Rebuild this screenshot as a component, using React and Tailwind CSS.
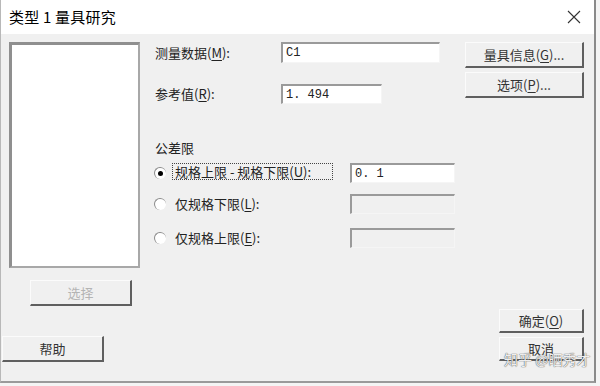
import React from "react";

const CJK = { fontFamily: '"Noto Sans CJK SC", "Noto Sans", sans-serif' };
const MONO = { fontFamily: '"Liberation Mono", "Noto Sans CJK SC", monospace' };

function Btn({ w, h, children, disabled, className = "" }) {
  return (
    <div
      className={`flex items-center justify-center bg-[#f0f0f0] border-t border-l border-[#fbfbfb] border-r-2 border-b-2 border-r-[#5f5f5f] border-b-[#5f5f5f] text-[13px] ${disabled ? "text-[#b4b4b4]" : "text-[#333]"} ${className}`}
      style={{ width: w, height: h }}
    >
      {children}
    </div>
  );
}

function Input({ w, h, value, disabled }) {
  return (
    <div
      className={`flex items-center border-t-2 border-l-2 border-[#9a9a9a] border-r border-b border-r-[#f5f5f5] border-b-[#f5f5f5] pl-[3px] text-[12px] text-[#222] ${disabled ? "bg-[#f0f0f0]" : "bg-white"}`}
      style={{ width: w, height: h, ...MONO }}
    >
      {value}
    </div>
  );
}

function Radio({ checked }) {
  return (
    <div className="w-[12px] h-[12px] rounded-full bg-white border-t-[1.5px] border-l-[1.5px] border-[#8a8a8a] border-r-0 border-b-0 flex items-center justify-center shrink-0">
      {checked && <div className="w-[5px] h-[5px] rounded-full bg-black" />}
    </div>
  );
}

const U = ({ children }) => <span className="underline underline-offset-2">{children}</span>;

export default function App() {
  return (
    <div className="w-[600px] h-[386px] bg-[#f4f4f4] overflow-hidden relative" style={CJK}>
      <div className="w-[596px] h-[383px] border-l border-r-2 border-b-2 border-l-[#b8b8b8] border-r-[#8a8a8a] border-b-[#9a9a9a] flex flex-col">
        {/* title bar */}
        <div className="h-[34px] bg-white flex items-center justify-between pl-[8px] pr-[13px] shrink-0">
          <span className="text-[15px] text-black tracking-[0.2px]">类型 1 量具研究</span>
          <svg width="14" height="14" viewBox="0 0 14 14">
            <path d="M1 1 L13 13 M13 1 L1 13" stroke="#333" strokeWidth="1.1" />
          </svg>
        </div>
        {/* body */}
        <div className="flex-1 bg-[#f0f0f0] flex pt-[8px] text-[#222]">
          {/* left column */}
          <div className="flex flex-col w-[138px] ml-[1px] shrink-0">
            <div className="ml-[7px] w-[131px] h-[226px] bg-white border-t-[3px] border-l-[3px] border-[#8f8f8f] border-r-2 border-b-2 border-r-[#a8a8a8] border-b-[#a8a8a8]" />
            <Btn w={102} h={26} disabled className="ml-[28px] mt-[12px]">选择</Btn>
            <Btn w={102} h={26} className="mt-[30px]">帮助</Btn>
          </div>
          {/* middle column */}
          <div className="flex flex-col w-[300px] ml-[15px] shrink-0 text-[13px]">
            <div className="flex items-center h-[21px]">
              <span className="w-[126px]">测量数据(<U>M</U>):</span>
              <Input w={159} h={21} value="C1" />
            </div>
            <div className="flex items-center h-[20px] mt-[21px]">
              <span className="w-[126px]">参考值(<U>R</U>):</span>
              <Input w={101} h={20} value="1. 494" />
            </div>
            <div className="h-[16px] mt-[36px] flex items-center">公差限</div>
            <div className="flex items-center h-[20px] mt-[7px]">
              <div className="-ml-[1px] flex items-center">
                <Radio checked />
              </div>
              <span className="ml-[6px] w-[161px] h-[17px] flex items-center px-[2px] border border-dotted border-[#444] self-start whitespace-nowrap">
                规格上限 - 规格下限(<U>U</U>):
              </span>
              <div className="ml-[17px]">
                <Input w={105} h={20} value="0. 1" />
              </div>
            </div>
            <div className="flex items-center h-[20px] mt-[11px]">
              <div className="-ml-[1px] flex items-center">
                <Radio />
              </div>
              <span className="ml-[6px] w-[161px] px-[3px]">仅规格下限(<U>L</U>):</span>
              <div className="ml-[17px]">
                <Input w={105} h={20} disabled value="" />
              </div>
            </div>
            <div className="flex items-center h-[20px] mt-[14px]">
              <div className="-ml-[1px] flex items-center">
                <Radio />
              </div>
              <span className="ml-[6px] w-[161px] px-[3px]">仅规格上限(<U>E</U>):</span>
              <div className="ml-[17px]">
                <Input w={105} h={20} disabled value="" />
              </div>
            </div>
          </div>
          {/* right column */}
          <div className="flex flex-col w-[119px] ml-[10px] shrink-0 pb-[20px]">
            <Btn w={119} h={26}>量具信息(<U>G</U>)...</Btn>
            <Btn w={119} h={26} className="mt-[4px]">选项(<U>P</U>)...</Btn>
            <Btn w={85} h={24} className="mt-auto self-end">确定(<U>O</U>)</Btn>
            <Btn w={85} h={24} className="mt-[4px] self-end">取消</Btn>
          </div>
        </div>
      </div>
      {/* watermark */}
      <div className="absolute left-[504px] top-[349px] text-[14px] whitespace-nowrap text-white/90 [text-shadow:0_0_1px_#555,0_0_1px_#555]">
        知乎 @晒秀才
      </div>
    </div>
  );
}
